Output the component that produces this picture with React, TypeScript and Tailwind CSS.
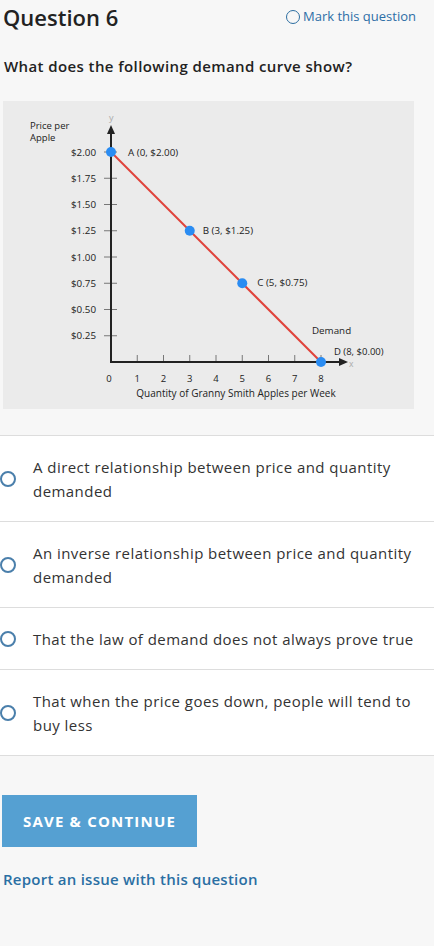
import React from "react";

const options = [
  "A direct relationship between price and quantity demanded",
  "An inverse relationship between price and quantity demanded",
  "That the law of demand does not always prove true",
  "That when the price goes down, people will tend to buy less",
];

const X0 = 111;
const Y0 = 362;
const STEP = 26.25;

const DemandChart: React.FC = () => {
  const priceLabels = ["$0.25", "$0.50", "$0.75", "$1.00", "$1.25", "$1.50", "$1.75", "$2.00"];
  const points = [
    { q: 0, p: 8, label: "A (0, $2.00)", dx: 17, dy: 4 },
    { q: 3, p: 5, label: "B (3, $1.25)", dx: 13, dy: 3 },
    { q: 5, p: 3, label: "C (5, $0.75)", dx: 15, dy: 3 },
  ];
  return (
    <svg viewBox="3 101 411 308" className="block w-full h-full" style={{ fontFamily: "'Open Sans', 'Liberation Sans', sans-serif" }}>
      <rect x="3" y="101" width="411" height="308" fill="#ebebeb" />
      <text x="30" y="129" fontSize="9.5" fill="#222">Price per</text>
      <text x="30" y="141" fontSize="9.5" fill="#222">Apple</text>
      <text x="109" y="121" fontSize="9" fill="#aaa">y</text>

      {/* y axis ticks + labels */}
      {priceLabels.map((l, i) => {
        const y = Y0 - STEP * (i + 1);
        return (
          <g key={l}>
            <line x1="104" x2="117" y1={y} y2={y} stroke="#777" strokeWidth="1" />
            <text x="96" y={y + 3.5} fontSize="9.8" fill="#222" textAnchor="end">{l}</text>
          </g>
        );
      })}

      {/* x axis ticks + labels */}
      {Array.from({ length: 9 }).map((_, i) => {
        const x = X0 + STEP * i;
        return (
          <g key={i}>
            {i > 0 && <line x1={x} x2={x} y1="355" y2="362" stroke="#777" strokeWidth="1" />}
            <text x={i === 0 ? x - 2 : x} y="382" fontSize="9.5" fill="#222" textAnchor="middle">{i}</text>
          </g>
        );
      })}

      <line x1={X0} y1={Y0 + 1} x2={X0} y2="133" stroke="#222" strokeWidth="2" />
      <polygon points={`${X0 - 4},134 ${X0},125 ${X0 + 4},134`} fill="#222" />
      <line x1={X0 - 1} y1={Y0} x2="340" y2={Y0} stroke="#222" strokeWidth="2" />
      <polygon points={`339,358 348,362 339,366`} fill="#222" />
      <text x="349" y="367" fontSize="8.5" fill="#aaa">x</text>

      <line x1={X0} y1={Y0 - STEP * 8} x2={X0 + STEP * 8} y2={Y0} stroke="#e0433b" strokeWidth="2" />

      {points.map((pt) => {
        const cx = X0 + STEP * pt.q;
        const cy = Y0 - STEP * pt.p;
        return (
          <g key={pt.label}>
            <circle cx={cx} cy={cy} r="5" fill="#2a8cf2" />
            <text x={cx + pt.dx} y={cy + pt.dy} fontSize="9.8" fill="#222">{pt.label}</text>
          </g>
        );
      })}
      <circle cx={X0 + STEP * 8} cy={Y0} r="5" fill="#2a8cf2" />
      <text x="312" y="334" fontSize="9.8" fill="#222">Demand</text>
      <text x="334" y="355" fontSize="9.5" fill="#222">D (8, $0.00)</text>

      <text x="236" y="397" fontSize="10" fill="#222" textAnchor="middle">Quantity of Granny Smith Apples per Week</text>
    </svg>
  );
};

const App: React.FC = () => {
  return (
    <div className="min-h-screen bg-[#f7f7f7] font-['Open_Sans','Liberation_Sans',sans-serif] text-[#333]">
      {/* Header */}
      <div className="flex items-center justify-between pl-[3px] pr-[18px] pt-[3px]">
        <h2 className="text-[22px] leading-[28px] font-semibold text-[#222]">Question 6</h2>
        <button className="flex items-center gap-[3px] text-[13px] text-[#2d6ea6]">
          <span className="w-[14px] h-[14px] rounded-full border-[1.5px] border-[#2d6ea1]" />
          Mark this question
        </button>
      </div>

      <p className="mt-[23px] pl-[4px] text-[15px] leading-[24px] font-semibold tracking-[0.4px] text-[#222]">What does the following demand curve show?</p>

      {/* Chart */}
      <div className="mt-[23px] ml-[3px] w-[411px] h-[308px]">
        <DemandChart />
      </div>

      {/* Options */}
      <div className="mt-[26px] bg-white border-t border-[#dddddd]">
        {options.map((o) => (
          <label key={o} className="flex items-center border-b border-[#dddddd] pt-[19px] pb-[18px] cursor-pointer">
            <span className="shrink-0 w-[16px] h-[16px] rounded-full border-2 border-[#4a7fab]" />
            <span className="ml-[17px] pr-[16px] text-[15px] leading-[24px] tracking-[0.45px] text-[#333]">{o}</span>
          </label>
        ))}
      </div>

      <button className="mt-[39px] ml-[2px] w-[195px] h-[52px] bg-[#55a0d2] text-white text-[15px] font-bold tracking-[1.2px]">
        SAVE &amp; CONTINUE
      </button>

      <div className="mt-[21px] pl-[3px] text-[15px] font-semibold tracking-[0.25px] text-[#2a6fa3]">Report an issue with this question</div>
    </div>
  );
};

export default App;
